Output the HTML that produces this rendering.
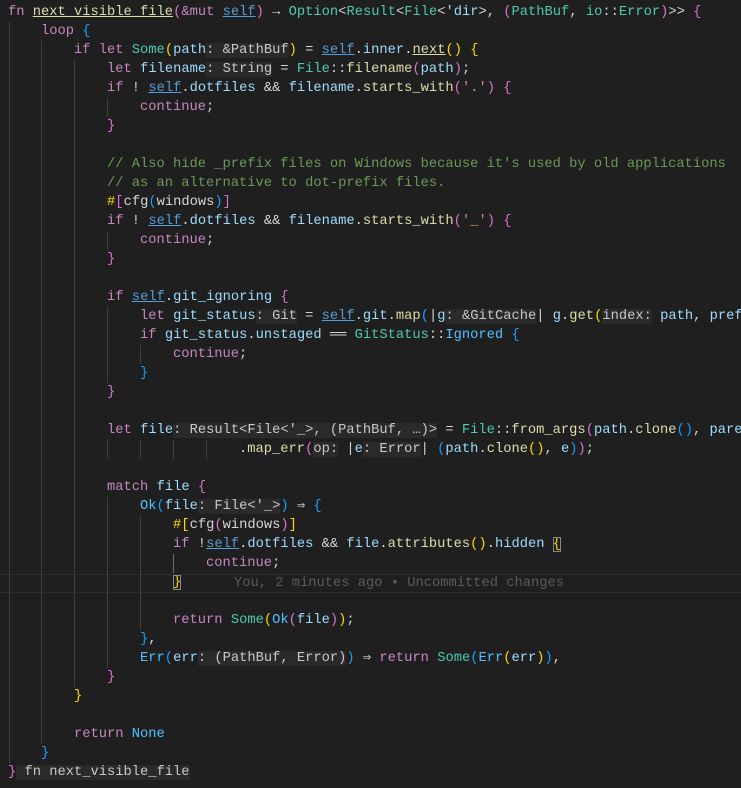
<!DOCTYPE html>
<html><head><meta charset="utf-8"><style>
html,body{margin:0;padding:0;background:#1f1f1f;width:741px;height:788px;overflow:hidden}
#ed{position:absolute;left:8px;top:2.5px;width:733px;overflow:hidden;font:13.75px/19px "Liberation Mono","DejaVu Sans Mono",monospace;color:#d4d4d4;white-space:normal}
#ed div{height:19px;white-space:pre}
.k{color:#c586c0}.f{color:#dcdcaa}.v{color:#9cdcfe}.t{color:#4ec9b0}.c{color:#6a9955}.s{color:#ce9178}
.sf{color:#569cd6;text-decoration:underline;text-decoration-color:#569cd6}
.ul{text-decoration:underline;text-decoration-color:#dcdcaa}
.cn{color:#4fc1ff}
.g{color:#ffd700}.o{color:#da70d6}.b{color:#179fff}
.h{background:#2a2a2a;color:#c8c8c8}
.bx{outline:1px solid #888;outline-offset:-1px}
.gd{position:absolute;width:1px;background:#404040}
.cur{position:absolute;left:0;width:741px;height:17px;top:574px;border-top:1px solid #2c2c2c;border-bottom:1px solid #2c2c2c}
.bl{position:absolute;left:234px;top:574px;font:13.75px/19px "Liberation Mono",monospace;color:#5a5a5a;white-space:pre}
</style></head><body>
<div class="cur"></div>
<div class="gd" style="left:9px;top:22px;height:741px"></div>
<div class="gd" style="left:41px;top:41px;height:703px"></div>
<div class="gd" style="left:74px;top:60px;height:627px"></div>
<div class="gd" style="left:107px;top:98px;height:19px"></div>
<div class="gd" style="left:107px;top:231px;height:19px"></div>
<div class="gd" style="left:107px;top:307px;height:76px"></div>
<div class="gd" style="left:140px;top:345px;height:19px"></div>
<div class="gd" style="left:107px;top:440px;height:19px"></div>
<div class="gd" style="left:140px;top:440px;height:19px"></div>
<div class="gd" style="left:173px;top:440px;height:19px"></div>
<div class="gd" style="left:206px;top:440px;height:19px"></div>
<div class="gd" style="left:107px;top:497px;height:171px"></div>
<div class="gd" style="left:140px;top:516px;height:114px"></div>
<div class="gd" style="left:173px;top:554px;height:19px;background:#707070"></div>
<div class="bl">You, 2 minutes ago • Uncommitted changes</div>
<div id="ed"><div><span class="k">fn</span> <span class="f ul">next_visible_file</span><span class="o">(</span><span class="k">&amp;mut</span> <span class="sf">self</span><span class="o">)</span> → <span class="t">Option</span>&lt;<span class="t">Result</span>&lt;<span class="t">File</span>&lt;<span class="v">'dir</span>&gt;, <span class="o">(</span><span class="t">PathBuf</span>, <span class="t">io</span>::<span class="t">Error</span><span class="o">)</span>&gt;&gt; <span class="o">{</span></div>
<div>    <span class="k">loop</span> <span class="b">{</span></div>
<div>        <span class="k">if let</span> <span class="t">Some</span><span class="g">(</span><span class="v">path</span><span class="h">: &amp;PathBuf</span><span class="g">)</span> = <span class="sf">self</span>.<span class="v">inner</span>.<span class="f ul">next</span><span class="g">()</span> <span class="g">{</span></div>
<div>            <span class="k">let</span> <span class="v">filename</span><span class="h">: String</span> = <span class="t">File</span>::<span class="f">filename</span><span class="o">(</span><span class="v">path</span><span class="o">)</span>;</div>
<div>            <span class="k">if</span> ! <span class="sf">self</span>.<span class="v">dotfiles</span> &amp;&amp; <span class="v">filename</span>.<span class="f">starts_with</span><span class="o">(</span><span class="s">'.'</span><span class="o">)</span> <span class="o">{</span></div>
<div>                <span class="k">continue</span>;</div>
<div>            <span class="o">}</span></div>
<div></div>
<div>            <span class="c">// Also hide _prefix files on Windows because it's used by old applications</span></div>
<div>            <span class="c">// as an alternative to dot-prefix files.</span></div>
<div>            <span class="g">#</span><span class="o">[</span>cfg<span class="b">(</span>windows<span class="b">)</span><span class="o">]</span></div>
<div>            <span class="k">if</span> ! <span class="sf">self</span>.<span class="v">dotfiles</span> &amp;&amp; <span class="v">filename</span>.<span class="f">starts_with</span><span class="o">(</span><span class="s">'_'</span><span class="o">)</span> <span class="o">{</span></div>
<div>                <span class="k">continue</span>;</div>
<div>            <span class="o">}</span></div>
<div></div>
<div>            <span class="k">if</span> <span class="sf">self</span>.<span class="v">git_ignoring</span> <span class="o">{</span></div>
<div>                <span class="k">let</span> <span class="v">git_status</span><span class="h">: Git</span> = <span class="sf">self</span>.<span class="v">git</span>.<span class="f">map</span><span class="b">(</span>|<span class="v">g</span><span class="h">: &amp;GitCache</span>| <span class="v">g</span>.<span class="f">get</span><span class="g">(</span><span class="h">index:</span> <span class="v">path</span>, <span class="v">prefix_lookup</span></div>
<div>                <span class="k">if</span> <span class="v">git_status</span>.<span class="v">unstaged</span> ══ <span class="t">GitStatus</span>::<span class="cn">Ignored</span> <span class="b">{</span></div>
<div>                    <span class="k">continue</span>;</div>
<div>                <span class="b">}</span></div>
<div>            <span class="o">}</span></div>
<div></div>
<div>            <span class="k">let</span> <span class="v">file</span><span class="h">: Result&lt;File&lt;'_&gt;, (PathBuf, …)&gt;</span> = <span class="t">File</span>::<span class="f">from_args</span><span class="o">(</span><span class="v">path</span>.<span class="f">clone</span><span class="b">()</span>, <span class="v">parent</span></div>
<div>                            .<span class="f">map_err</span><span class="o">(</span><span class="h">op:</span> |<span class="v">e</span><span class="h">: Error</span>| <span class="b">(</span><span class="v">path</span>.<span class="f">clone</span><span class="g">()</span>, <span class="v">e</span><span class="b">)</span><span class="o">)</span>;</div>
<div></div>
<div>            <span class="k">match</span> <span class="v">file</span> <span class="o">{</span></div>
<div>                <span class="cn">Ok</span><span class="b">(</span><span class="v">file</span><span class="h">: File&lt;'_&gt;</span><span class="b">)</span> ⇒ <span class="b">{</span></div>
<div>                    <span class="g">#</span><span class="g">[</span>cfg<span class="o">(</span>windows<span class="o">)</span><span class="g">]</span></div>
<div>                    <span class="k">if</span> !<span class="sf">self</span>.<span class="v">dotfiles</span> &amp;&amp; <span class="v">file</span>.<span class="f">attributes</span><span class="g">()</span>.<span class="v">hidden</span> <span class="g bx">{</span></div>
<div>                        <span class="k">continue</span>;</div>
<div>                    <span class="g bx">}</span></div>
<div></div>
<div>                    <span class="k">return</span> <span class="t">Some</span><span class="g">(</span><span class="cn">Ok</span><span class="o">(</span><span class="v">file</span><span class="o">)</span><span class="g">)</span>;</div>
<div>                <span class="b">}</span>,</div>
<div>                <span class="cn">Err</span><span class="b">(</span><span class="v">err</span><span class="h">: (PathBuf, Error)</span><span class="b">)</span> ⇒ <span class="k">return</span> <span class="t">Some</span><span class="b">(</span><span class="cn">Err</span><span class="g">(</span><span class="v">err</span><span class="g">)</span><span class="b">)</span>,</div>
<div>            <span class="o">}</span></div>
<div>        <span class="g">}</span></div>
<div></div>
<div>        <span class="k">return</span> <span class="cn">None</span></div>
<div>    <span class="b">}</span></div>
<div><span class="o">}</span><span class="h"> fn next_visible_file</span></div></div>
</body></html>
